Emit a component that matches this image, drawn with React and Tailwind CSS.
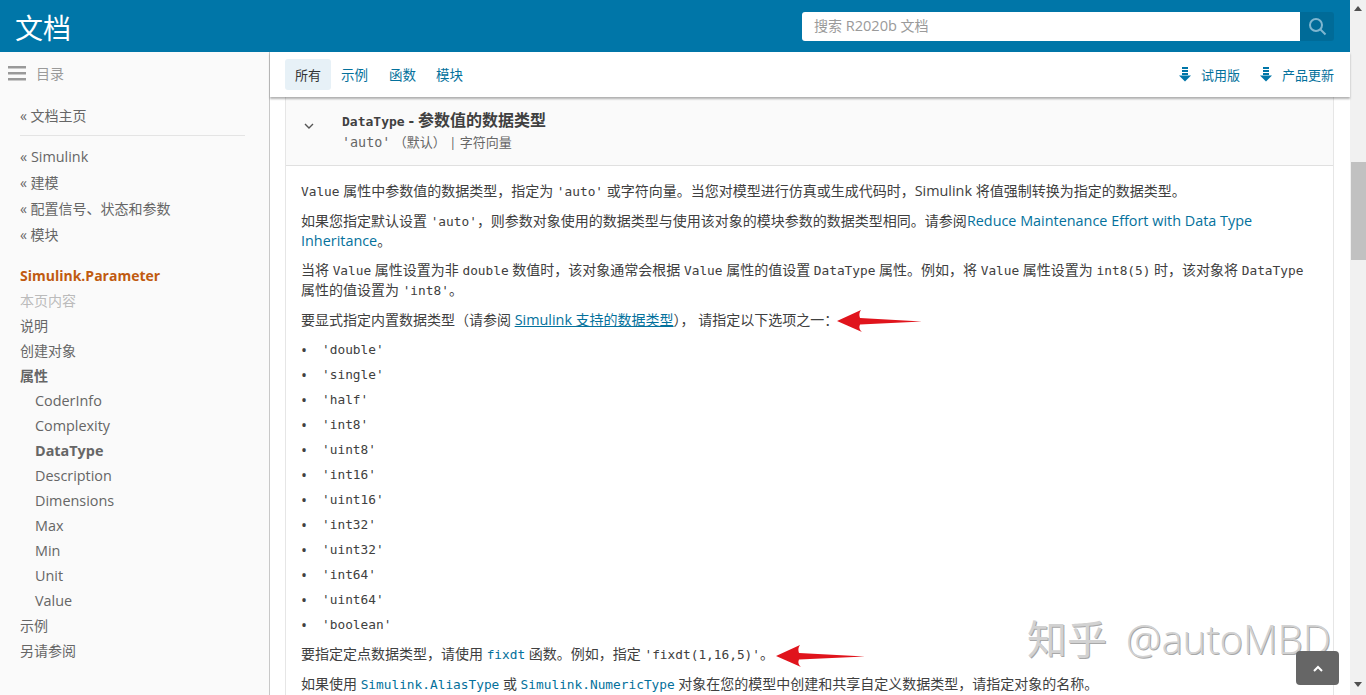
import React from "react";

const sans = { fontFamily: '"Open Sans","Noto Sans CJK SC",sans-serif' };
const mono = { fontFamily: '"DejaVu Sans Mono",monospace' };
const M = ({ children, link }) => (
  <span className={"text-[12.8px] leading-[14px] " + (link ? "text-[#04719c]" : "")} style={mono}>{children}</span>
);
const Lat = ({ children }) => <span className="text-[14.4px] leading-[14px]">{children}</span>;
const L = ({ children, u }) => <a className={"text-[#04719c] " + (u ? "underline" : "")}>{children}</a>;

const Dl = () => (
  <svg width="12" height="15" viewBox="0 0 12 15" fill="#0076a8">
    <rect x="3" y="0" width="6" height="2" />
    <rect x="3" y="3" width="6" height="2" />
    <rect x="3" y="6" width="6" height="2" />
    <path d="M0 8.5h12L6 14.5z" />
  </svg>
);

const Arrow = ({ className, w }) => (
  <svg className={"absolute " + className} width={w} height="24" viewBox={`0 0 ${w} 24`}>
    <path d={`M0 12 L24 1 C22 4 22 6 23 9 L${w} 12.5 L23 15.5 C22 18 22 20 25 23 Z`} fill="#e0141c" />
  </svg>
);

const types = ["double", "single", "half", "int8", "uint8", "int16", "uint16", "int32", "uint32", "int64", "uint64", "boolean"];
const crumbs = ["Simulink", "建模", "配置信号、状态和参数", "模块"];
const props = ["CoderInfo", "Complexity", "DataType", "Description", "Dimensions", "Max", "Min", "Unit", "Value"];

export default function App() {
  return (
    <div className="relative flex h-[695px] w-[1366px] overflow-hidden bg-white text-[#404040]" style={sans}>
      <div className="flex w-[1350px] flex-col">
        <header className="flex h-[52px] shrink-0 items-center justify-between bg-[#0076a8] pl-[15px] pr-[16px]">
          <span className="mt-[3px] text-[28px] leading-none text-white">文档</span>
          <div className="flex h-[29px] w-[532px]">
            <div className="flex flex-1 items-center rounded-l-[3px] bg-white pl-3 text-[14px] text-[#9a9a9a]">
              <span>搜索 <span className="text-[14.6px]">R2020b</span> 文档</span>
            </div>
            <div className="flex w-[34px] items-center justify-center rounded-r-[3px] bg-[#006b98]">
              <svg width="19" height="19" viewBox="0 0 19 19" fill="none" stroke="#7fb6d0" strokeWidth="2">
                <circle cx="8" cy="8" r="6" />
                <path d="M12.5 12.5L17.5 17.5" />
              </svg>
            </div>
          </div>
        </header>

        <div className="flex min-h-0 flex-1">
          <aside className="w-[270px] shrink-0 border-r border-[#c8c8c8] bg-[#fafafa] text-[14px] text-[#666]">
            <div className="flex h-[43px] items-center pl-[8px]">
              <svg width="18" height="15" viewBox="0 0 18 15" fill="#999">
                <rect y="0" width="18" height="2.5" />
                <rect y="6" width="18" height="2.5" />
                <rect y="12" width="18" height="2.5" />
              </svg>
              <span className="ml-[10px] text-[#9a9a9a]">目录</span>
            </div>
            <div className="pl-[20px] pr-[24px]">
              <div className="mt-[10px] h-[31px] border-b border-[#e4e4e4] leading-[22px]">« 文档主页</div>
              <div className="mt-[8px]">
                {crumbs.map((c) => (
                  <div key={c} className={"h-[26px] leading-[26px] " + (c === "Simulink" ? "text-[14.4px]" : "")}>« {c}</div>
                ))}
              </div>
              <div className="mt-[15px] h-[25px] text-[14px] font-bold leading-[25px] text-[#c05a10]">Simulink.Parameter</div>
              <div className="h-[25px] leading-[25px] text-[#bbb]">本页内容</div>
              <div className="h-[25px] leading-[25px]">说明</div>
              <div className="h-[25px] leading-[25px]">创建对象</div>
              <div className="h-[25px] font-bold leading-[25px]">属性</div>
              {props.map((p) => (
                <div key={p} className={"h-[25px] pl-[15px] text-[14.4px] leading-[25px] " + (p === "DataType" ? "font-bold" : "")}>{p}</div>
              ))}
              <div className="h-[25px] leading-[25px]">示例</div>
              <div className="h-[25px] leading-[25px]">另请参阅</div>
            </div>
          </aside>

          <main className="flex min-w-0 flex-1 flex-col">
            <div className="z-10 flex h-[45px] shrink-0 items-center justify-between pl-[15px] pr-[16px] text-[13.5px] shadow-[0_2px_2px_rgba(0,0,0,0.3)]">
              <div className="flex items-center gap-[10px] text-[#04719c]">
                <span className="flex h-[31px] w-[46px] items-center justify-center rounded-[3px] bg-[#e7f1f7] pt-[2px] text-[13px] text-[#333]">所有</span>
                <span className="mr-[11px] pt-[2px]">示例</span>
                <span className="mr-[10px] pt-[2px]">函数</span>
                <span className="pt-[2px]">模块</span>
              </div>
              <div className="flex items-center text-[13px] text-[#04719c]">
                <Dl />
                <span className="ml-[10px] mr-[20px] pt-[2px]">试用版</span>
                <Dl />
                <span className="ml-[10px] pt-[2px]">产品更新</span>
              </div>
            </div>

            <div className="ml-[15px] mr-[16px] min-h-0 flex-1 border-x border-[#e6e6e6]">
              <div className="flex h-[69px] border-b border-[#e0e0e0] bg-[#fafafa]">
                <svg className="ml-[18px] mt-[26px] shrink-0" width="10" height="7" viewBox="0 0 10 7" fill="none" stroke="#555" strokeWidth="1.4">
                  <path d="M1 1l4 4 4-4" />
                </svg>
                <div className="ml-[28px] pt-[11px]">
                  <div className="h-[24px] text-[16px] font-bold leading-[24px] text-[#404040]">
                    <span className="text-[13px] leading-[14px]" style={mono}>DataType</span> - 参数值的数据类型
                  </div>
                  <div className="text-[13px] leading-[20px] text-[#666]">
                    <span className="text-[13.4px] leading-[14px]" style={mono}>'auto'</span> （默认） | 字符向量
                  </div>
                </div>
              </div>

              <div className="relative px-[15px] text-[14px] leading-[20px]">
                <p className="mt-[15px]"><M>Value</M> 属性中参数值的数据类型，指定为 <M>'auto'</M> 或字符向量。当您对模型进行仿真或生成代码时，<Lat>Simulink</Lat> 将值强制转换为指定的数据类型。</p>
                <p className="mt-[10px]">如果您指定默认设置 <M>'auto'</M>，则参数对象使用的数据类型与使用该对象的模块参数的数据类型相同。请参阅<L><Lat>Reduce Maintenance Effort with Data Type Inheritance</Lat></L>。</p>
                <p className="mt-[9px]">当将 <M>Value</M> 属性设置为非 <M>double</M> 数值时，该对象通常会根据 <M>Value</M> 属性的值设置 <M>DataType</M> 属性。例如，将 <M>Value</M> 属性设置为 <M>int8(5)</M> 时，该对象将 <M>DataType</M><br />属性的值设置为 <M>'int8'</M>。</p>
                <p className="mt-[10px]">要显式指定内置数据类型（请参阅 <L u><Lat>Simulink</Lat> 支持的数据类型</L>）， 请指定以下选项之一：</p>
                <ul className="mt-[7px]">
                  {types.map((t) => (
                    <li key={t} className="flex h-[25px] items-center">
                      <span className="w-[21px] text-[16px] leading-[14px]">•</span>
                      <M>'{t}'</M>
                    </li>
                  ))}
                </ul>
                <p className="mt-[7px]">要指定定点数据类型，请使用 <M link>fixdt</M> 函数。例如，指定 <M>'fixdt(1,16,5)'</M>。</p>
                <p className="mt-[10px] whitespace-nowrap">如果使用 <M link>Simulink.AliasType</M> 或 <M link>Simulink.NumericType</M> 对象在您的模型中创建和共享自定义数据类型，请指定对象的名称。</p>
              </div>
            </div>
          </main>
        </div>
      </div>

      <div className="flex w-[16px] shrink-0 flex-col items-center bg-[#f1f1f1]">
        <svg className="mt-[6px]" width="8" height="5" viewBox="0 0 8 5" fill="#505050"><path d="M4 0l4 5H0z" /></svg>
        <div className="mt-[151px] h-[98px] w-[15px] bg-[#c1c1c1]" />
        <svg className="mt-[422px]" width="8" height="5" viewBox="0 0 8 5" fill="#505050"><path d="M4 5L0 0h8z" /></svg>
      </div>

      <Arrow className="left-[837px] top-[309px]" w={85} />
      <Arrow className="left-[776px] top-[644px]" w={89} />

      <div
        className="pointer-events-none absolute left-[1027px] top-[612px] flex items-baseline gap-[19px] whitespace-nowrap leading-[54px] text-[#d2d2d2]"
        style={{ textShadow: "1px 1px 0 #a8a8a8" }}
      >
        <span className="text-[40px]">知乎</span>
        <span className="text-[40px] font-light">@autoMBD</span>
      </div>

      <div className="absolute left-[1296px] top-[651px] flex h-[34px] w-[43px] items-center justify-center rounded-[4px] bg-[#666]">
        <svg width="10" height="7" viewBox="0 0 10 7" fill="none" stroke="#fff" strokeWidth="2"><path d="M1 6l4-4 4 4" /></svg>
      </div>
    </div>
  );
}
